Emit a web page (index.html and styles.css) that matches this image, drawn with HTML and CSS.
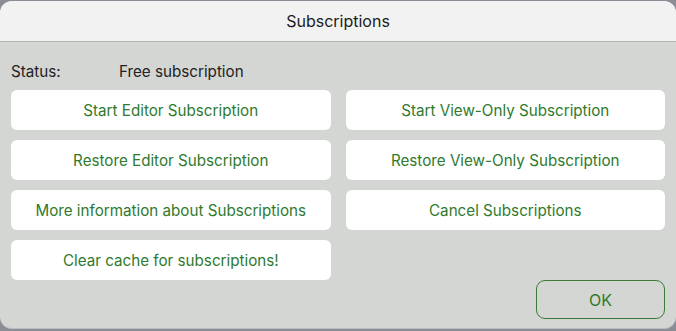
FILE: index.html
```html
<html lang="en">
<head>
    <meta charset="UTF-8">
    <meta name="viewport" content="width=device-width, initial-scale=1.0">
    <title>Subscriptions</title>
    <link rel="stylesheet" href="styles.css">
</head>
<body>
    <div class="dialog">
        <div class="dialog-header">Subscriptions</div>
        <div class="dialog-body">
            <div class="status-row">
                <span class="status-label">Status:</span>
                <span class="status-value">Free subscription</span>
            </div>
            <div class="button-grid">
                <button class="btn">Start Editor Subscription</button>
                <button class="btn">Start View-Only Subscription</button>
                <button class="btn">Restore Editor Subscription</button>
                <button class="btn">Restore View-Only Subscription</button>
                <button class="btn">More information about Subscriptions</button>
                <button class="btn">Cancel Subscriptions</button>
                <button class="btn">Clear cache for subscriptions!</button>
            </div>
            <div class="dialog-footer">
                <button class="btn-ok">OK</button>
            </div>
        </div>
    </div>
</body>
</html>
```

FILE: styles.css
```css
body {
    margin: 0;
    background-color: #8a8d93;
    font-family: Inter, "Noto Sans", sans-serif;
}

.dialog {
    margin-top: 1px;
    height: 328px;
    background-color: #d4d6d3;
    border-radius: 12px;
    overflow: hidden;
    box-sizing: border-box;
    border-bottom: 1px solid #b9bcc2;
}

.dialog-header {
    height: 40px;
    line-height: 41px;
    text-align: center;
    font-size: 16px;
    color: #1c1c1c;
    background-color: #f2f2f2;
    border-bottom: 1px solid #b2b3b2;
}

.dialog-body {
    padding: 0 11px;
}

.status-row {
    display: flex;
    padding-top: 20px;
    margin-bottom: 8px;
    line-height: 20px;
    font-size: 15.2px;
    color: #222;
}

.status-label {
    width: 108px;
}

.button-grid {
    display: grid;
    grid-template-columns: 1fr 1fr;
    grid-auto-rows: 40px;
    column-gap: 15px;
    row-gap: 10px;
}

.btn {
    border: none;
    border-radius: 6px;
    background-color: #fff;
    color: #2f7a2e;
    font-family: inherit;
    font-size: 15.2px;
    padding: 0;
}

.dialog-footer {
    display: flex;
    justify-content: flex-end;
}

.btn-ok {
    width: 129px;
    height: 39px;
    border: 1px solid #3d7a3a;
    border-radius: 9px;
    background-color: transparent;
    color: #2f7a2e;
    font-family: inherit;
    font-size: 16px;
}
```
